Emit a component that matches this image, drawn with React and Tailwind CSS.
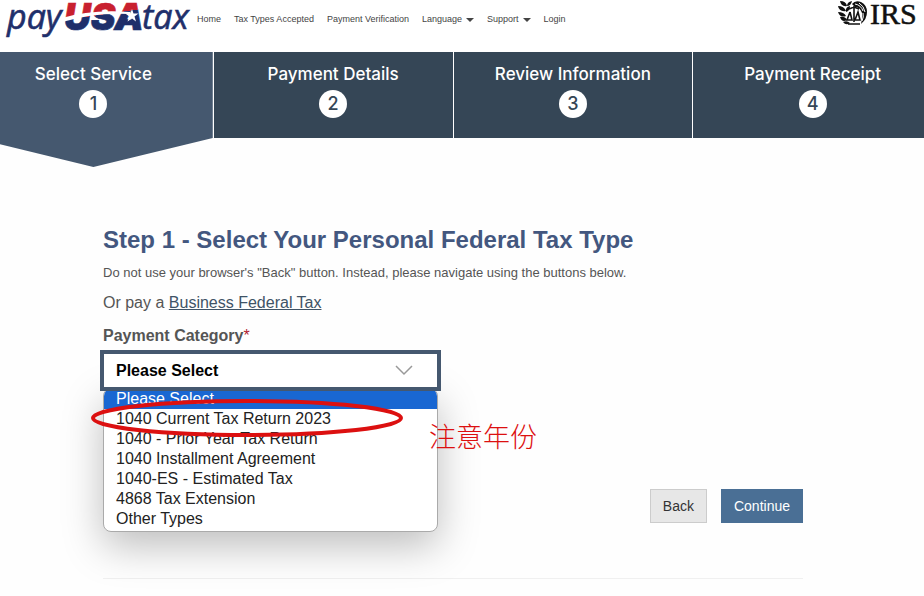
import React, { useState } from 'react';

const NAV_LINKS = [
  { label: 'Home' },
  { label: 'Tax Types Accepted' },
  { label: 'Payment Verification' },
  { label: 'Language', menu: true },
  { label: 'Support', menu: true },
  { label: 'Login' },
];

const STEPS = ['Select Service', 'Payment Details', 'Review Information', 'Payment Receipt'];

const TAX_TYPES = [
  'Please Select',
  '1040 Current Tax Return 2023',
  '1040 - Prior Year Tax Return',
  '1040 Installment Agreement',
  '1040-ES - Estimated Tax',
  '4868 Tax Extension',
  'Other Types',
];

const Logo = () => (
  <svg width="190" height="42" viewBox="0 0 190 42" role="img" aria-label="payUSAtax" className="overflow-visible">
    <defs>
      <linearGradient id="usa" gradientUnits="userSpaceOnUse" x1="97" y1="1" x2="101" y2="29">
        <stop offset="0.5" stopColor="#c8202f" />
        <stop offset="0.5" stopColor="#1f2f6b" />
      </linearGradient>
    </defs>
    <g fill="#1f2f6b" className="italic">
      <text x="7" y="29" fontSize="34" stroke="#1f2f6b" strokeWidth="0.600" className="font-['Open_Sans'] font-medium">pay</text>
      <text x="64" y="30" fontSize="37" fill="url(#usa)" stroke="url(#usa)" strokeWidth="0.600" className="font-['Inter'] font-black">USA</text>
      <text x="142" y="29" fontSize="34" stroke="#1f2f6b" strokeWidth="0.600" className="font-['Open_Sans'] font-medium">tax</text>
    </g>
    {/* swoosh through USA */}
    <path d="M62 18Q92 9 130 12L130 14Q96 12 62 22Z" fill="#fff" />
    <path d="M132 9l1.500 4.500h5l-4 3 1.500 5-4-3-4.500 3 1.800-5-4-3h5z" fill="#fff" />
  </svg>
);

const IrsLogo = () => (
  <svg width="80" height="28" viewBox="0 0 80 28" role="img" aria-label="IRS" className="overflow-visible">
    {/* laurel */}
    <g fill="#111">
      <path d="M2 1q6 0 7 5q-6 1-7-5zM0 6q6 0 8 5q-7 1-8-5zM0 12q6 0 8 4q-6 2-8-4zM2 17q5-1 7 3q-5 3-7-3zM5 22q4-2 7 1q-4 3-7-1z" />
      <path d="M14 1q-1 5-5 5q0-4 5-5zM12 6q0 5-4 6q-1-5 4-6z" />
    </g>
    {/* scales */}
    <path d="M11 9l5-2l5 2M16 6v16M12 12l-3 8h5l-2-8M20 12l-3 8h5zM10 24h12" fill="none" stroke="#111" strokeWidth="1.600" />
    {/* eagle */}
    <path d="M14 4q3-4 9-2q6 3 6 10q0 7-6 12q2-6 1-11q-2-6-7-6z" fill="#111" />
    <path d="M17 4q6 1 8 7M21 3q5 3 6 9M25 13q1 4-1 8" fill="none" stroke="#fff" strokeWidth="1" />
    <text x="32" y="24" fontSize="30" fill="#111" stroke="#111" strokeWidth="0.500" className="font-['Liberation_Serif']">IRS</text>
  </svg>
);

const Header = () => (
  <header className="flex h-[52px] items-start justify-between bg-white pr-[6px]">
    <div className="flex items-start">
      <a href="#home" className="block w-[190px]"><Logo /></a>
      <nav className="flex gap-[13px] pt-[13px] pl-[7px] text-[9px] leading-3 text-[#444]">
        {NAV_LINKS.map(({ label, menu }) => (
          <a key={label} href={`#${label}`} className="flex items-center gap-1 whitespace-nowrap">
            {label}
            {menu && (
              <svg width="8" height="4" viewBox="0 0 8 4" className="mt-[2px]"><path d="M0 0h8l-4 4z" fill="#444" /></svg>
            )}
          </a>
        ))}
      </nav>
    </div>
    <a href="#irs"><IrsLogo /></a>
  </header>
);

const StepBar = () => (
  <div className="overflow-hidden">
    <ol className="-mr-2 -ml-[26px] grid grid-cols-4 items-start gap-px font-['Inter'] text-[17px] font-medium text-white">
      {STEPS.map((label, i) => (
        <li
          key={label}
          className={`flex flex-col items-center gap-1 pt-[10px] ${
            i === 0 ? 'h-[115px] bg-[#45586f] [clip-path:polygon(0_0,100%_0,100%_86px,50%_100%,0_86px)]' : 'h-[86px] bg-[#354656]'
          }`}
        >
          <span className="leading-6">{label}</span>
          <span className="flex size-7 items-center justify-center rounded-full bg-white text-lg leading-6 text-[#354656]">
            {i + 1}
          </span>
        </li>
      ))}
    </ol>
  </div>
);

const CategorySelect = () => {
  const [value, setValue] = useState(TAX_TYPES[0]);

  return (
    <div className="relative -ml-[3px] w-[341px]">
      <select
        id="category"
        value={value}
        onChange={(e) => setValue(e.target.value)}
        className="relative z-10 block h-[41px] w-full appearance-none border-4 border-[#45586f] bg-white pl-3 text-base font-bold text-black outline-none"
      >
        {TAX_TYPES.map((t) => <option key={t}>{t}</option>)}
      </select>
      <svg className="pointer-events-none absolute top-[15px] right-[28px] z-10" width="18" height="11" viewBox="0 0 18 11">
        <path d="M1 1l8 8l8-8" fill="none" stroke="#999" strokeWidth="1.500" />
      </svg>

      {/* Open list */}
      <ul
        role="listbox"
        aria-label="Payment Category"
        className="absolute top-[38px] right-[3px] left-[3px] overflow-hidden rounded-lg border border-[#aaa] bg-white pb-[2px] text-base leading-5 text-[#222] shadow-[0_14px_40px_rgba(0,0,0,0.26)]"
      >
        {TAX_TYPES.map((t) => (
          <li
            key={t}
            role="option"
            aria-selected={t === value}
            onClick={() => setValue(t)}
            className={`px-3 ${t === value ? 'bg-[#1967d2] text-white' : ''}`}
          >
            {t}
          </li>
        ))}
      </ul>

      {/* Marker round the current year */}
      <svg className="pointer-events-none absolute top-12 -left-[10px] z-20" width="314" height="41" viewBox="0 0 314 41">
        <ellipse cx="157" cy="20" rx="154" ry="17" fill="none" stroke="#dc1010" strokeWidth="4" />
      </svg>
      <p lang="zh" className="absolute top-[72px] left-[329px] z-20 font-['Liberation_Sans','Noto_Sans_CJK_SC',sans-serif] text-[27px] leading-8 font-light whitespace-nowrap text-[#dc1010]">
        注意年份
      </p>
    </div>
  );
};

const App = () => (
  <div className="min-h-screen bg-[#fefefe] font-['Liberation_Sans',Arial,sans-serif] text-[#555]">
    <Header />
    <StepBar />
    <main className="pt-[57px] pr-[121px] pl-[103px]">
      <h1 className="text-2xl leading-8 font-bold text-[#43577f]">Step 1 - Select Your Personal Federal Tax Type</h1>
      <p className="mt-[9px] text-[13px] leading-4">
        Do not use your browser's "Back" button. Instead, please navigate using the buttons below.
      </p>
      <p className="mt-3 text-base leading-5">
        Or pay a <a href="#business" className="text-[#3f5366] underline">Business Federal Tax</a>
      </p>
      <label htmlFor="category" className="mt-[13px] mb-1 block text-base leading-5 font-bold">
        Payment Category<span className="font-normal text-[#b02030]">*</span>
      </label>
      <CategorySelect />
      <div className="mt-[98px] flex justify-end gap-[14px] text-sm">
        <button type="button" className="h-[34px] border border-[#ccc] bg-[#e7e7e7] px-3 text-[#333]">Back</button>
        <button type="button" className="h-[34px] bg-[#4a6f95] px-[13px] text-white">Continue</button>
      </div>
      <hr className="mt-[55px] border-[#f0f0f0]" />
    </main>
  </div>
);

export default App;
